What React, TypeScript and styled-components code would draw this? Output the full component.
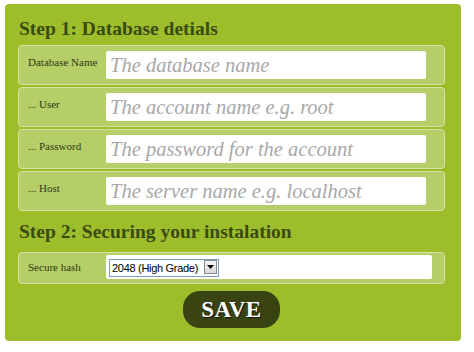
import React from "react";
import styled, { createGlobalStyle } from "styled-components";

const GlobalStyle = createGlobalStyle`
  html, body {
    margin: 0;
    padding: 0;
    background: #ffffff;
  }
  * {
    box-sizing: border-box;
  }
`;

const Panel = styled.form`
  margin: 4px 0 0 5px;
  width: 456px;
  height: 337px;
  padding: 14px 16px 13px 13px;
  background: #9ebd2b;
  border-radius: 4px;
  display: flex;
  flex-direction: column;
  font-family: "Liberation Serif", "DejaVu Serif", serif;
`;

const Heading = styled.h2<{ $top?: number; $height?: number }>`
  margin: ${(p) => p.$top ?? 0}px 0 0 1px;
  height: ${(p) => p.$height ?? 27}px;
  line-height: 22px;
  font-size: 19.5px;
  font-weight: bold;
  color: #3a4b11;
`;

const Rows = styled.div`
  display: flex;
  flex-direction: column;
  gap: 2px;
`;

const Row = styled.div<{ $compact?: boolean }>`
  display: flex;
  align-items: flex-start;
  height: ${(p) => (p.$compact ? 32 : 40)}px;
  padding: ${(p) => (p.$compact ? "2px 12px 0 0" : "5px 18px 0 0")};
  background: #b6ce68;
  border: 1px solid #d6e4a3;
  border-radius: 4px;
`;

const Label = styled.label<{ $compact?: boolean }>`
  flex: 0 0 87px;
  padding: ${(p) => (p.$compact ? "5px" : "4px")} 0 0 9px;
  font-size: 11px;
  line-height: 14px;
  color: #2f3a10;
`;

const TextInput = styled.input`
  flex: 1;
  height: 28px;
  border: none;
  border-radius: 2px;
  background: #ffffff;
  padding: 0 4px;
  font-family: "Liberation Serif", "DejaVu Serif", serif;
  font-style: italic;
  font-size: 20.5px;
  color: #555;
  outline: none;

  &::placeholder {
    color: #a8a8a8;
  }
`;

const SelectBox = styled.div`
  flex: 1;
  height: 24px;
  background: #ffffff;
  border-radius: 2px;
  padding: 3px 0 0 3px;
`;

const SelectWrap = styled.div`
  position: relative;
  width: 110px;
  height: 18px;
`;

const Select = styled.select`
  appearance: none;
  width: 100%;
  height: 100%;
  border: 1px solid #7f9db9;
  background: #ffffff;
  padding: 0 0 0 2px;
  font-family: "Liberation Sans", Arial, sans-serif;
  font-size: 11px;
  letter-spacing: -0.3px;
  color: #000;
  outline: none;
`;

const Arrow = styled.span`
  position: absolute;
  right: 2px;
  top: 2px;
  width: 13px;
  height: 14px;
  background: linear-gradient(#f4f4f4, #d8d8d8);
  border: 1px solid #8a8a8a;
  display: flex;
  align-items: center;
  justify-content: center;
  pointer-events: none;
`;

const Footer = styled.div`
  display: flex;
  justify-content: center;
  padding-top: 7px;
`;

const SaveButton = styled.button`
  width: 97px;
  height: 37px;
  border: none;
  border-radius: 17px;
  background: #3a4412;
  color: #ffffff;
  font-family: "Liberation Serif", "DejaVu Serif", serif;
  font-weight: bold;
  font-size: 23px;
  letter-spacing: 0.5px;
  text-shadow: 1px 1px 1px #111;
  cursor: pointer;
`;

const fields = [
  { label: "Database Name", placeholder: "The database name" },
  { label: "... User", placeholder: "The account name e.g. root" },
  { label: "... Password", placeholder: "The password for the account" },
  { label: "... Host", placeholder: "The server name e.g. localhost" },
];

export default function App() {
  return (
    <>
      <GlobalStyle />
      <Panel onSubmit={(e) => e.preventDefault()}>
        <Heading>Step 1: Database detials</Heading>
        <Rows>
          {fields.map((f) => (
            <Row key={f.label}>
              <Label>{f.label}</Label>
              <TextInput placeholder={f.placeholder} />
            </Row>
          ))}
        </Rows>
        <Heading $top={10} $height={31}>
          Step 2: Securing your instalation
        </Heading>
        <Row $compact>
          <Label $compact>Secure hash</Label>
          <SelectBox>
            <SelectWrap>
              <Select defaultValue="2048">
                <option value="1024">1024 (Low Grade)</option>
                <option value="2048">2048 (High Grade)</option>
              </Select>
              <Arrow>
                <svg width="7" height="4" viewBox="0 0 7 4">
                  <path d="M0 0h7L3.5 4z" fill="#000" />
                </svg>
              </Arrow>
            </SelectWrap>
          </SelectBox>
        </Row>
        <Footer>
          <SaveButton type="submit">SAVE</SaveButton>
        </Footer>
      </Panel>
    </>
  );
}
